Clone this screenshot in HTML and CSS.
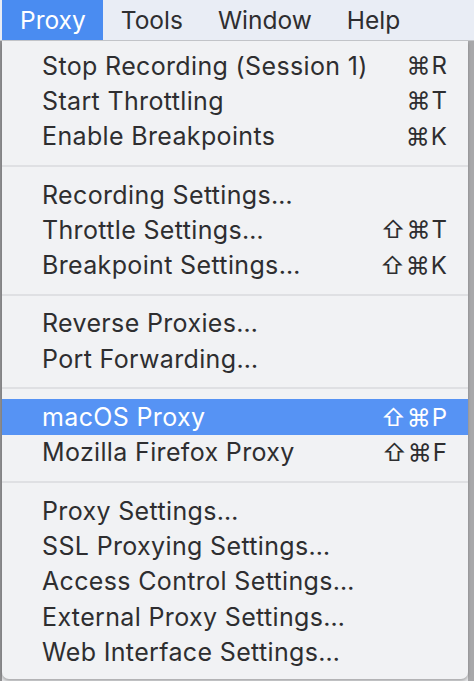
FILE: index.html
```html
<!DOCTYPE html>
<html>
<head>
<meta charset="utf-8">
<link rel="stylesheet" href="styles.css">
</head>
<body>
<div class="menubar">
  <div class="title active">Proxy</div>
  <div class="title">Tools</div>
  <div class="title">Window</div>
  <div class="title">Help</div>
</div>
<div class="stage">
  <div class="menu">
    <div class="item"><span class="label">Stop Recording (Session 1)</span><span class="key">⌘R</span></div>
    <div class="item"><span class="label">Start Throttling</span><span class="key">⌘T</span></div>
    <div class="item"><span class="label">Enable Breakpoints</span><span class="key">⌘K</span></div>
    <div class="sep"></div>
    <div class="item"><span class="label">Recording Settings…</span></div>
    <div class="item"><span class="label">Throttle Settings…</span><span class="key">⇧⌘T</span></div>
    <div class="item"><span class="label">Breakpoint Settings…</span><span class="key">⇧⌘K</span></div>
    <div class="sep"></div>
    <div class="item"><span class="label">Reverse Proxies…</span></div>
    <div class="item"><span class="label">Port Forwarding…</span></div>
    <div class="sep"></div>
    <div class="item selected"><span class="label">macOS Proxy</span><span class="key">⇧⌘P</span></div>
    <div class="item"><span class="label">Mozilla Firefox Proxy</span><span class="key">⇧⌘F</span></div>
    <div class="sep"></div>
    <div class="item"><span class="label">Proxy Settings…</span></div>
    <div class="item"><span class="label">SSL Proxying Settings…</span></div>
    <div class="item"><span class="label">Access Control Settings…</span></div>
    <div class="item"><span class="label">External Proxy Settings…</span></div>
    <div class="item"><span class="label">Web Interface Settings…</span></div>
  </div>
</div>
</body>
</html>
```
FILE: styles.css
```css
html, body {
  margin: 0;
  padding: 0;
}
body {
  width: 474px;
  height: 681px;
  overflow: hidden;
  background: #c9c9cb;
  font-family: Inter, "Liberation Sans", sans-serif;
  color: #2e2e30;
}
.menubar {
  height: 40px;
  display: flex;
  align-items: stretch;
  background: #e9edf5;
  border-bottom: 1px solid #c4c6ca;
  padding-left: 2px;
}
.title {
  display: flex;
  align-items: center;
  padding: 0 17px 0 18px;
  font-size: 24.5px;
}
.title.active {
  background: #4a8cf1;
  color: #ffffff;
}
.stage {
  height: 640px;
  background: linear-gradient(to right, #909092 0, #909092 2px, #e4e5e7 2px, #e4e5e7 468px, #a8a8aa 468px);
}
.menu {
  margin: 0 6px 0 2px;
  background: #f1f2f4;
  border-radius: 0 0 7px 7px;
  box-shadow: 0 2px 3px rgba(0,0,0,0.25);
  padding: 7px 0 10px;
}
.item {
  height: 35.3px;
  display: flex;
  align-items: center;
  justify-content: space-between;
  padding: 0 20px 0 40px;
  font-size: 25px;
  letter-spacing: 0.35px;
}
.item.selected {
  background: #5693f4;
  color: #ffffff;
}
.key {
  font-size: 24px;
  letter-spacing: 1px;
}
.sep {
  height: 2px;
  margin: 11px 0 10px;
  background: #dfe0e3;
}
```
